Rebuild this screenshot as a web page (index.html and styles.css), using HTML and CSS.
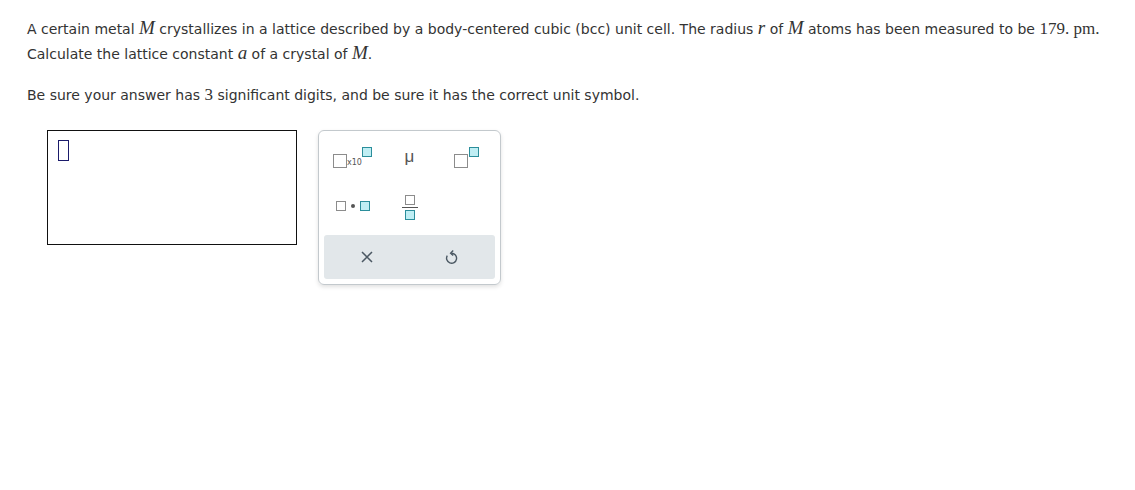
FILE: index.html
```html
<!DOCTYPE html>
<html>

<head>
    <title>Lattice Constant Question</title>
    <link rel="stylesheet" href="styles.css">
</head>

<body>
    <div class="question">
        <p class="prompt">
            A certain metal <span class="math">M</span> crystallizes in a lattice described by a body-centered cubic
            (bcc) unit cell. The radius <span class="math">r</span> of <span class="math">M</span> atoms has been
            measured to be <span class="num">179. pm.</span><br>
            Calculate the lattice constant <span class="math">a</span> of a crystal of <span class="math">M</span>.
        </p>

        <p class="prompt">
            Be sure your answer has <span class="num">3</span> significant digits, and be sure it has the correct unit
            symbol.
        </p>

        <div class="answer-row">
            <div class="answer-box">
                <span class="cursor"></span>
            </div>

            <div class="palette">
                <div class="palette-grid">
                    <button class="tool" title="scientific notation">
                        <span class="sq sq-base"></span><span class="x10">x10</span><span class="sq sq-exp"></span>
                    </button>
                    <button class="tool mu" title="micro">μ</button>
                    <button class="tool" title="power">
                        <span class="sq sq-base"></span><span class="sq sq-exp sq-pow"></span>
                    </button>
                    <button class="tool" title="multiply">
                        <span class="sq sq-small"></span><span class="dot"></span><span class="sq sq-small sq-fill"></span>
                    </button>
                    <button class="tool frac" title="fraction">
                        <span class="sq sq-small"></span><span class="bar"></span><span class="sq sq-small sq-fill"></span>
                    </button>
                    <span class="tool empty"></span>
                </div>

                <div class="palette-actions">
                    <button class="action" title="clear">
                        <svg width="14" height="14" viewBox="0 0 14 14">
                            <path d="M2 2 L12 12 M12 2 L2 12" stroke="#4b5863" stroke-width="1.5" fill="none" />
                        </svg>
                    </button>
                    <button class="action" title="undo">
                        <svg width="14" height="16" viewBox="0 0 14 16">
                            <path d="M6.5 4.2 A5 5 0 1 1 2.3 6.6" stroke="#4b5863" stroke-width="1.4" fill="none" />
                            <path d="M8.2 1.6 L5.6 4.2 L8.2 6.6" stroke="#4b5863" stroke-width="1.4" fill="none" />
                        </svg>
                    </button>
                </div>
            </div>
        </div>
    </div>
</body>

</html>
```

FILE: styles.css
```css
body {
    font-family: "DejaVu Sans", Verdana, sans-serif;
    font-size: 14px;
    color: #333;
    margin: 0;
    background-color: white;
}

.question {
    padding: 16px 27px;
}

.prompt {
    margin: 0 0 17px 0;
    line-height: 24px;
    white-space: nowrap;
}

.math {
    font-family: "Liberation Serif", "DejaVu Serif", serif;
    font-style: italic;
    font-size: 19px;
}

.num {
    font-family: "Liberation Serif", "DejaVu Serif", serif;
    font-size: 17px;
}

.answer-row {
    display: flex;
    align-items: flex-start;
    gap: 21px;
    margin: 23px 0 0 20px;
}

.answer-box {
    width: 228px;
    height: 95px;
    border: 1px solid #111;
    padding: 9px 10px;
}

.cursor {
    display: block;
    width: 9px;
    height: 19px;
    border: 1.5px solid #1b1b6b;
}

.palette {
    width: 171px;
    border: 1px solid #c3c9cd;
    border-radius: 6px;
    padding: 3px 5px 5px 5px;
    box-shadow: 0 2px 4px rgba(0, 0, 0, 0.12);
}

.palette-grid {
    display: grid;
    grid-template-columns: repeat(3, 1fr);
    grid-auto-rows: 48px;
    margin-bottom: 5px;
}

.tool {
    display: flex;
    align-items: center;
    justify-content: center;
    background: none;
    border: none;
    padding: 0;
    cursor: pointer;
    font-family: inherit;
}

.sq {
    display: inline-block;
    box-sizing: border-box;
    border: 1.5px solid #8c8c8c;
    background-color: white;
}

.sq-base {
    width: 14px;
    height: 14px;
    margin-top: 6px;
}

.sq-exp {
    width: 10px;
    height: 10px;
    border-color: #2b8e9b;
    background-color: #bfeef4;
    margin-bottom: 12px;
}

.sq-pow {
    margin-left: 1px;
}

.x10 {
    font-size: 8px;
    color: #555;
    margin-top: 9px;
}

.mu {
    font-size: 17px;
    color: #555;
    font-family: "Liberation Sans", sans-serif;
    padding-bottom: 3px;
}

.sq-small {
    width: 10px;
    height: 10px;
}

.sq-fill {
    border-color: #2b8e9b;
    background-color: #bfeef4;
}

.dot {
    width: 4px;
    height: 4px;
    border-radius: 50%;
    background-color: #555;
    margin: 0 5px;
}

.frac {
    flex-direction: column;
    gap: 2px;
    padding-top: 2px;
}

.frac .bar {
    width: 16px;
    height: 1px;
    background-color: #555;
}

.palette-actions {
    display: flex;
    height: 44px;
    background-color: #e2e7ea;
    border-radius: 3px;
}

.action {
    flex: 1;
    display: flex;
    align-items: center;
    justify-content: center;
    background: none;
    border: none;
    cursor: pointer;
}
```
